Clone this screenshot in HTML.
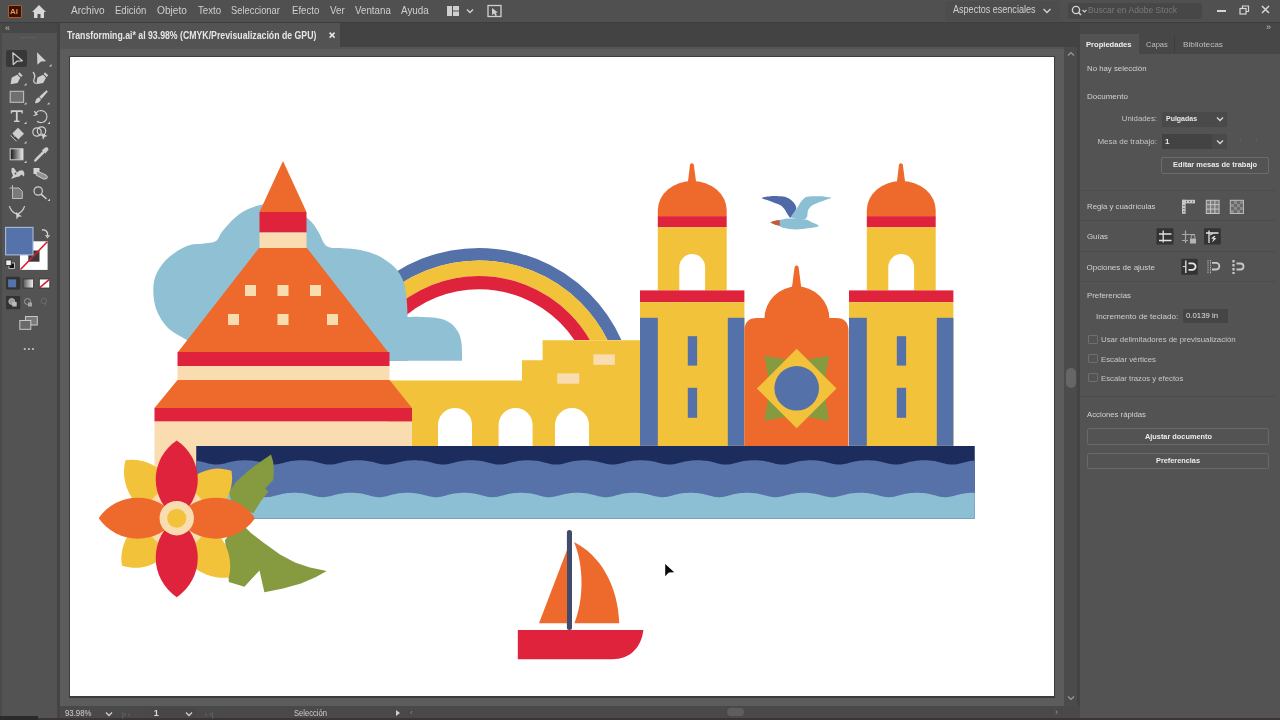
<!DOCTYPE html>
<html><head><meta charset="utf-8">
<style>
*{margin:0;padding:0;box-sizing:border-box}
html,body{width:1280px;height:720px;overflow:hidden;background:#535353;font-family:"Liberation Sans",sans-serif}
.a{position:absolute}
.t{position:absolute;white-space:nowrap}
</style></head><body>
<div id="wrap" style="position:absolute;left:0;top:0;width:1280px;height:720px;filter:blur(0.45px)">
<div class="a" style="left:0px;top:0px;width:1280px;height:22px;background:#505050;"></div>
<div class="a" style="left:0px;top:22px;width:1280px;height:1px;background:#3d3d3d;"></div>
<div class="a" style="left:0px;top:23px;width:60px;height:697px;background:#535353;"></div>
<div class="a" style="left:0px;top:23px;width:2px;height:697px;background:#4a4a4a;"></div>
<div class="a" style="left:57px;top:23px;width:3px;height:697px;background:#434343;"></div>
<div class="a" style="left:2px;top:23px;width:55px;height:10px;background:#474747;"></div>
<div class="a" style="left:60px;top:23px;width:1020px;height:24px;background:#434343;"></div>
<div class="a" style="left:60px;top:23px;width:280px;height:24px;background:#535353;"></div>
<div class="a" style="left:60px;top:47px;width:1004px;height:659px;background:#5c5c5c;"></div>
<div class="a" style="left:60px;top:47px;width:1004px;height:2px;background:#555555;"></div>
<div class="a" style="left:1064px;top:47px;width:13px;height:659px;background:#4b4b4b;"></div>
<div class="a" style="left:1077px;top:23px;width:3px;height:697px;background:#434343;"></div>
<div class="a" style="left:1080px;top:23px;width:200px;height:694px;background:#535353;"></div>
<div class="a" style="left:1080px;top:23px;width:200px;height:11px;background:#474747;"></div>
<div class="a" style="left:1139px;top:34px;width:141px;height:20px;background:#474747;"></div>
<div class="a" style="left:1174px;top:36px;width:1px;height:16px;background:#3c3c3c;"></div>
<div class="a" style="left:60px;top:706px;width:1020px;height:12px;background:#494949;"></div>
<div class="a" style="left:0px;top:717.5px;width:1280px;height:3px;background:#3b3338;"></div>
<div class="a" style="left:0px;top:716px;width:38px;height:4px;background:#2a2a2a;"></div>
<div class="a" style="left:69px;top:56px;width:986px;height:642px;background:#3c3c3c;"></div>
<div class="a" style="left:70px;top:57px;width:984px;height:639px;background:#ffffff;"></div>
<div class="t" style="left:70.60px;top:4.81px;font-size:10.5px;line-height:10.5px;font-weight:400;color:#cfcfcf;transform:scaleX(0.960);transform-origin:left;filter:blur(0.35px);">Archivo</div>
<div class="t" style="left:115.00px;top:4.81px;font-size:10.5px;line-height:10.5px;font-weight:400;color:#cfcfcf;transform:scaleX(0.909);transform-origin:left;filter:blur(0.35px);">Edición</div>
<div class="t" style="left:156.70px;top:4.81px;font-size:10.5px;line-height:10.5px;font-weight:400;color:#cfcfcf;transform:scaleX(0.967);transform-origin:left;filter:blur(0.35px);">Objeto</div>
<div class="t" style="left:197.80px;top:4.81px;font-size:10.5px;line-height:10.5px;font-weight:400;color:#cfcfcf;transform:scaleX(0.920);transform-origin:left;filter:blur(0.35px);">Texto</div>
<div class="t" style="left:231.40px;top:4.81px;font-size:10.5px;line-height:10.5px;font-weight:400;color:#cfcfcf;transform:scaleX(0.891);transform-origin:left;filter:blur(0.35px);">Seleccionar</div>
<div class="t" style="left:291.50px;top:4.81px;font-size:10.5px;line-height:10.5px;font-weight:400;color:#cfcfcf;transform:scaleX(0.917);transform-origin:left;filter:blur(0.35px);">Efecto</div>
<div class="t" style="left:329.50px;top:4.81px;font-size:10.5px;line-height:10.5px;font-weight:400;color:#cfcfcf;transform:scaleX(0.939);transform-origin:left;filter:blur(0.35px);">Ver</div>
<div class="t" style="left:354.50px;top:4.81px;font-size:10.5px;line-height:10.5px;font-weight:400;color:#cfcfcf;transform:scaleX(0.929);transform-origin:left;filter:blur(0.35px);">Ventana</div>
<div class="t" style="left:400.50px;top:4.81px;font-size:10.5px;line-height:10.5px;font-weight:400;color:#cfcfcf;transform:scaleX(0.940);transform-origin:left;filter:blur(0.35px);">Ayuda</div>
<div class="a" style="left:8px;top:5px;width:14px;height:13px;background:#3a1205;border:1px solid #a8602e;border-radius:1px"></div>
<div class="t" style="left:10.00px;top:8.23px;font-size:8px;line-height:8px;font-weight:700;color:#e99a50;filter:blur(0.3px);">Ai</div>
<svg class="a" style="left:30px;top:3px" width="18" height="17" viewBox="0 0 18 17"><path d="M9 2 L16 9 L14 9 L14 15 L10.5 15 L10.5 11 L7.5 11 L7.5 15 L4 15 L4 9 L2 9 Z" fill="#d8d8d8"/></svg>
<svg class="a" style="left:445px;top:4px" width="32" height="14" viewBox="0 0 32 14"><rect x="2" y="2" width="5" height="10" fill="#cfcfcf"/><rect x="8" y="2" width="6" height="4.5" fill="#cfcfcf"/><rect x="8" y="7.5" width="6" height="4.5" fill="#cfcfcf"/><path d="M22 5.5 L25 8.5 L28 5.5" stroke="#cfcfcf" stroke-width="1.4" fill="none"/></svg>
<svg class="a" style="left:485px;top:3px" width="20" height="16" viewBox="0 0 20 16"><rect x="3" y="2.5" width="13" height="11" fill="none" stroke="#cfcfcf" stroke-width="1.3"/><path d="M7 5 L7 12 L9 10.5 L10.5 13 L12 12.3 L10.6 9.8 L13 9.5 Z" fill="#cfcfcf"/></svg>
<div class="a" style="left:945px;top:1px;width:115px;height:20px;background:#4d4d4d;"></div>
<div class="t" style="left:952.50px;top:5.04px;font-size:10px;line-height:10px;font-weight:400;color:#d0d0d0;transform:scaleX(0.905);transform-origin:left;filter:blur(0.35px);">Aspectos esenciales</div>
<svg class="a" style="left:1042px;top:7px" width="10" height="8" viewBox="0 0 10 8"><path d="M1.5 2 L5 5.5 L8.5 2" stroke="#cfcfcf" stroke-width="1.4" fill="none"/></svg>
<div class="a" style="left:1068px;top:3px;width:134px;height:16px;background:#474747;border-radius:2px"></div>
<svg class="a" style="left:1070px;top:4px" width="20" height="14" viewBox="0 0 20 14"><circle cx="6" cy="6" r="3.6" stroke="#d0d0d0" stroke-width="1.4" fill="none"/><path d="M8.5 8.5 L11 11" stroke="#d0d0d0" stroke-width="1.6"/><path d="M12.5 6 L14.5 8 L16.5 6" stroke="#d0d0d0" stroke-width="1.1" fill="none"/></svg>
<div class="t" style="left:1088.00px;top:6.38px;font-size:9px;line-height:9px;font-weight:400;color:#7a7a7a;transform:scaleX(0.951);transform-origin:left;filter:blur(0.35px);">Buscar en Adobe Stock</div>
<div class="a" style="left:1217px;top:10px;width:9px;height:1.6px;background:#d6d6d6;"></div>
<svg class="a" style="left:1238px;top:3px" width="14" height="14" viewBox="0 0 14 14"><rect x="2" y="5.5" width="6" height="5.5" fill="none" stroke="#d6d6d6" stroke-width="1.2"/><path d="M4.5 5.5 L4.5 3 L10.5 3 L10.5 8.5 L8 8.5" fill="none" stroke="#d6d6d6" stroke-width="1.2"/></svg>
<svg class="a" style="left:1259px;top:2px" width="14" height="14" viewBox="0 0 14 14"><path d="M3 4 L10 11 M10 4 L3 11" stroke="#d6d6d6" stroke-width="1.5"/></svg>
<div class="t" style="left:66.80px;top:30.83px;font-size:10px;line-height:10px;font-weight:700;color:#e6e6e6;transform:scaleX(0.873);transform-origin:left;filter:blur(0.35px);">Transforming.ai* al 93.98% (CMYK/Previsualización de GPU)</div>
<svg class="a" style="left:327px;top:30px" width="10" height="10" viewBox="0 0 10 10"><path d="M2.6 2.6 L7.6 7.6 M7.6 2.6 L2.6 7.6" stroke="#e6e6e6" stroke-width="1.5"/></svg>
<div class="t" style="left:5.00px;top:23.88px;font-size:9px;line-height:9px;font-weight:400;color:#bdbdbd;filter:blur(0.35px);">«</div>
<div class="a" style="left:20px;top:37px;width:17px;height:1px;background:#5e5e5e;"></div>
<div class="a" style="left:6px;top:50px;width:21px;height:17px;background:#383838;border-radius:2px"></div>
<svg class="a" style="left:0;top:0" width="60" height="360" viewBox="0 0 60 360">
<g fill="none" stroke="#c9c9c9" stroke-width="1.3" stroke-linejoin="round" stroke-linecap="round">
 <!-- selection outline arrow -->
 <path d="M12.8 52.8 L22.3 60.8 L17 61.2 L13.3 64.6 Z"/>
</g>
<g fill="#cfcfcf">
 <!-- direct selection -->
 <path d="M37 52.2 L46.2 61.2 L41 61.5 L37.4 64.8 Z"/>
 <path d="M49 66.5 L51.5 64 L51.5 66.5 Z"/>
 <!-- pen -->
 <path d="M19.3 72.2 L22.6 75.5 L21 77 L18 74 Z"/>
 <path d="M17.3 74.8 L20.3 77.8 L17.5 83 L10.5 84.3 L11.8 77.5 Z"/>
 <path d="M24 85.5 L26.5 83 L26.5 85.5 Z"/>
 <!-- curvature pen -->
 <path d="M45 72.2 L48.3 75.5 L46.7 77 L43.7 74 Z"/>
 <path d="M43 74.8 L46 77.8 L43.2 83 L36.2 84.3 L37.5 77.5 Z"/>
 <path d="M24 104.5 L26.5 102 L26.5 104.5 Z"/>
 <path d="M47 104.5 L49.5 102 L49.5 104.5 Z"/>
 <!-- paintbrush -->
 <path d="M46.5 90.3 L47.8 91.6 L41.5 99 L39.3 96.8 Z"/>
 <path d="M38.8 97.3 L41 99.5 Q39.5 103 35 103.3 Q35.5 99 38.8 97.3 Z"/>
 <!-- T -->
 <path d="M10.8 110.3 L22.8 110.3 L22.8 113.5 L21.6 113.5 L21.3 112 L17.7 112 L17.7 120.5 L19.6 120.8 L19.6 122 L14 122 L14 120.8 L15.9 120.5 L15.9 112 L12.3 112 L12 113.5 L10.8 113.5 Z"/>
 <path d="M24 124 L26.5 121.5 L26.5 124 Z"/>
 <path d="M47.5 124 L50 121.5 L50 124 Z"/>
 <!-- eraser -->
 <path d="M18 127.8 L24 133.8 L16.3 141.5 L10.3 135.5 Z"/>
 <path d="M24 143.5 L26.5 141 L26.5 143.5 Z"/>
 <!-- eyedropper -->
 <path d="M45.8 147.3 Q48.5 147 48.5 149.7 L45.3 153.6 L41.9 150.2 Z"/>
 <path d="M24 163 L26.5 160.5 L26.5 163 Z"/>
 <!-- zoom small tri -->
 <path d="M47.5 201 L50 198.5 L50 201 Z"/>
</g>
<g fill="none" stroke="#cfcfcf" stroke-width="1.2" stroke-linecap="round">
 <path d="M33.3 72.5 Q35.5 75 34.5 78 Q32.5 82 35.5 83.3"/>
 <!-- rotate -->
 <path d="M35.5 114 A6 6 0 1 1 37.5 121.5" stroke-dasharray="2 1"/>
 <path d="M34.5 111.5 L37 114.5 L34 115.5" />
 <!-- shape builder -->
 <circle cx="37" cy="132" r="4.2"/>
 <circle cx="41.5" cy="131" r="4.2"/>
 <!-- eyedropper body -->
 <path d="M44 152.5 L37 159.5 Q35 161.5 34.8 161 Q34.3 160.5 36.3 158.5 L43.3 151.5" stroke-width="1.3"/>
 <!-- zoom -->
 <circle cx="38.2" cy="191" r="4.2"/>
 <path d="M41.3 194.3 L46 198.5" stroke-width="1.6"/>
 <!-- curved arrows -->
 <path d="M9.5 206.5 Q12 213 17 214 Q22 213 24.5 206.5"/>
</g>
<g fill="#cfcfcf">
 <path d="M41.5 133 L47.5 136 L44.5 137 L43 140 Z"/>
 <path d="M16 212 L22 216.5 L18.5 216.8 L16.5 219.5 Z"/>
</g>
<!-- eraser dark band -->
<path d="M12.3 133.5 L18.3 139.5 L16.9 140.9 L10.9 134.9 Z" fill="#3d3d3d"/><path d="M13.6 134.8 L15 136.2 L15 137.2 L13.6 135.8 Z" fill="#cfcfcf"/>
<!-- rectangle tool -->
<rect x="10.2" y="91.3" width="13.4" height="11" fill="#707070" stroke="#bdbdbd" stroke-width="1.1"/>
<!-- gradient tool -->
<defs>
 <linearGradient id="tg" x1="0" x2="1"><stop offset="0" stop-color="#111"/><stop offset="1" stop-color="#eee"/></linearGradient>
 <linearGradient id="tg2" x1="0" x2="1"><stop offset="0" stop-color="#555"/><stop offset="1" stop-color="#f5f5f5"/></linearGradient>
</defs>
<rect x="10.2" y="148.8" width="12.8" height="11" fill="url(#tg)" stroke="#cfcfcf" stroke-width="1"/>
<!-- puppet warp -->
<path d="M11.5 168.5 Q13.5 166.5 15 169.5 L17 172.5 Q20 169.5 23 170.5 Q25 172.5 24 176.5 L21.5 174.5 Q19.5 177 16.5 177 L11 179 L13 175.5 L11.5 172 Z" fill="#cfcfcf"/><circle cx="15.5" cy="173.5" r="0.9" fill="#555"/>
<!-- slice tool -->
<rect x="33.5" y="168" width="6" height="6" fill="#d5d5d5"/>
<path d="M37 171 L46 175 Q48.5 177 46.5 178.8 L43.5 179 L36 175 Z" fill="#909090" stroke="#cfcfcf" stroke-width="1"/>
<!-- artboard tool -->
<path d="M12.5 188 L19 188 L22.3 191.3 L22.3 198.5 L12.5 198.5 Z" fill="#7a7a7a" stroke="#bdbdbd" stroke-width="1"/>
<path d="M12.5 185 L12.5 188 M9.5 188 L12.5 188" stroke="#bdbdbd" stroke-width="1"/>
<!-- fill / stroke -->
<rect x="20" y="241.3" width="27.6" height="28.6" fill="#ffffff"/>
<rect x="28.3" y="250.5" width="11.2" height="11.2" fill="#3a3a3a"/>
<path d="M20.5 269.5 L47.3 241.8" stroke="#d21f2b" stroke-width="1.6"/>
<rect x="5.6" y="227.4" width="27.4" height="27.5" fill="#5572aa" stroke="#a9bbdc" stroke-width="1.1"/>
<path d="M42 230 Q46 229 47.5 233 L47.5 236" fill="none" stroke="#d5d5d5" stroke-width="1.3"/>
<path d="M45.5 235 L47.5 237.5 L49.5 235" fill="none" stroke="#d5d5d5" stroke-width="1.2"/>
<rect x="9" y="263" width="5.5" height="5.5" fill="#111" stroke="#ddd" stroke-width="0.8"/>
<rect x="5.8" y="260" width="5.5" height="5.5" fill="#eee" stroke="#222" stroke-width="0.8"/>
<!-- color mode row -->
<rect x="6" y="276.7" width="14.2" height="12.8" fill="#333" rx="1"/>
<rect x="7.8" y="279" width="8.8" height="8.8" fill="#5572aa" stroke="#2a2a2a" stroke-width="0.6"/>
<rect x="23" y="279" width="10.5" height="9" fill="url(#tg2)" stroke="#333" stroke-width="0.8"/>
<rect x="39.3" y="279" width="10.5" height="9" fill="#fff" stroke="#333" stroke-width="0.8"/>
<path d="M39.8 287.6 L49.4 279.4" stroke="#c8202a" stroke-width="1.5"/>
<!-- draw modes -->
<rect x="6" y="296" width="14.2" height="13.3" fill="#333" rx="1"/>
<circle cx="11.8" cy="301.5" r="3" fill="#9a9a9a" stroke="#bbb" stroke-width="0.8"/>
<rect x="12.2" y="302" width="4.5" height="4.5" fill="#bbb"/>
<circle cx="27.5" cy="301.5" r="3" fill="none" stroke="#a5a5a5" stroke-width="0.9"/>
<rect x="28" y="302.5" width="4" height="4" fill="#a5a5a5"/>
<circle cx="44" cy="301" r="2.8" fill="none" stroke="#6a6a6a" stroke-width="0.9"/>
<path d="M45.5 302 L45.5 306" stroke="#6a6a6a" stroke-width="0.9"/>
<!-- screen mode -->
<rect x="25.5" y="316.5" width="11.8" height="8.5" fill="#7a7a7a" stroke="#c8c8c8" stroke-width="1"/>
<rect x="19.8" y="320.5" width="11" height="8.8" fill="#6a6a6a" stroke="#c8c8c8" stroke-width="1"/>
<!-- more -->
<circle cx="24.8" cy="349" r="1.1" fill="#c5c5c5"/><circle cx="28.9" cy="349" r="1.1" fill="#c5c5c5"/><circle cx="33" cy="349" r="1.1" fill="#c5c5c5"/>
</svg>

<div class="t" style="left:1266.00px;top:23.38px;font-size:9px;line-height:9px;font-weight:400;color:#bdbdbd;filter:blur(0.35px);">»</div>
<div class="t" style="left:1086.00px;top:41.03px;font-size:8px;line-height:8px;font-weight:700;color:#f0f0f0;transform:scaleX(0.948);transform-origin:left;filter:blur(0.35px);">Propiedades</div>
<div class="t" style="left:1146.00px;top:41.03px;font-size:8px;line-height:8px;font-weight:400;color:#bdbdbd;transform:scaleX(0.943);transform-origin:left;filter:blur(0.35px);">Capas</div>
<div class="t" style="left:1183.00px;top:41.03px;font-size:8px;line-height:8px;font-weight:400;color:#bdbdbd;transform:scaleX(1.034);transform-origin:left;filter:blur(0.35px);">Bibliotecas</div>
<div class="t" style="left:1086.80px;top:65.13px;font-size:8px;line-height:8px;font-weight:400;color:#d2d2d2;transform:scaleX(0.977);transform-origin:left;filter:blur(0.35px);">No hay selección</div>
<div class="t" style="left:1087.00px;top:92.53px;font-size:8px;line-height:8px;font-weight:400;color:#d2d2d2;filter:blur(0.35px);">Documento</div>
<div class="t" style="left:1120.68px;top:114.63px;font-size:8px;line-height:8px;font-weight:400;color:#c4c4c4;transform:scaleX(0.977);transform-origin:right;filter:blur(0.35px);">Unidades:</div>
<div class="a" style="left:1162px;top:112px;width:65px;height:15px;background:#4a4a4a;box-shadow:0 0 0 0.5px #505050"></div>
<div class="t" style="left:1166.00px;top:115.23px;font-size:8px;line-height:8px;font-weight:700;color:#e8e8e8;transform:scaleX(0.872);transform-origin:left;filter:blur(0.35px);">Pulgadas</div>
<svg class="a" style="left:1215px;top:115px" width="10" height="8" viewBox="0 0 10 8"><path d="M2 2.5 L5 5.5 L8 2.5" stroke="#d8d8d8" stroke-width="1.3" fill="none"/></svg>
<div class="t" style="left:1097.41px;top:137.73px;font-size:8px;line-height:8px;font-weight:400;color:#c4c4c4;filter:blur(0.35px);">Mesa de trabajo:</div>
<div class="a" style="left:1162px;top:134px;width:65px;height:15px;background:#4a4a4a;"></div>
<div class="a" style="left:1162px;top:134px;width:50px;height:15px;background:#434343;"></div>
<div class="t" style="left:1165.00px;top:137.73px;font-size:8px;line-height:8px;font-weight:700;color:#e8e8e8;filter:blur(0.35px);">1</div>
<svg class="a" style="left:1215px;top:138px" width="10" height="8" viewBox="0 0 10 8"><path d="M2 2.5 L5 5.5 L8 2.5" stroke="#d8d8d8" stroke-width="1.3" fill="none"/></svg>
<div class="t" style="left:1239.00px;top:137.23px;font-size:8px;line-height:8px;font-weight:400;color:#6a6a6a;filter:blur(0.35px);">‹</div>
<div class="t" style="left:1255.00px;top:137.23px;font-size:8px;line-height:8px;font-weight:400;color:#6a6a6a;filter:blur(0.35px);">›</div>
<div class="a" style="left:1161px;top:156.5px;width:108px;height:17px;border:1px solid #6c6c6c;border-radius:2px"></div>
<div class="t" style="left:1169.87px;top:161.23px;font-size:8px;line-height:8px;font-weight:700;color:#ececec;transform:scaleX(0.931);transform-origin:center;filter:blur(0.35px);">Editar mesas de trabajo</div>
<div class="a" style="left:1080px;top:190px;width:195px;height:1px;background:#4c4c4c;"></div>
<div class="t" style="left:1086.50px;top:203.23px;font-size:8px;line-height:8px;font-weight:400;color:#d2d2d2;transform:scaleX(0.975);transform-origin:left;filter:blur(0.35px);">Regla y cuadrículas</div>
<div class="a" style="left:1080px;top:220px;width:195px;height:1px;background:#4c4c4c;"></div>
<div class="t" style="left:1086.50px;top:233.23px;font-size:8px;line-height:8px;font-weight:400;color:#d2d2d2;transform:scaleX(0.984);transform-origin:left;filter:blur(0.35px);">Guías</div>
<div class="a" style="left:1080px;top:251px;width:195px;height:1px;background:#4c4c4c;"></div>
<div class="t" style="left:1086.50px;top:263.73px;font-size:8px;line-height:8px;font-weight:400;color:#d2d2d2;filter:blur(0.35px);">Opciones de ajuste</div>
<div class="a" style="left:1080px;top:281px;width:195px;height:1px;background:#4c4c4c;"></div>
<div class="t" style="left:1086.50px;top:291.73px;font-size:8px;line-height:8px;font-weight:400;color:#d2d2d2;transform:scaleX(0.980);transform-origin:left;filter:blur(0.35px);">Preferencias</div>
<div class="t" style="left:1095.50px;top:312.73px;font-size:8px;line-height:8px;font-weight:400;color:#cfcfcf;transform:scaleX(1.011);transform-origin:left;filter:blur(0.35px);">Incremento de teclado:</div>
<div class="a" style="left:1183px;top:309px;width:45px;height:14px;background:#454545;"></div>
<div class="t" style="left:1186.00px;top:312.23px;font-size:8px;line-height:8px;font-weight:400;color:#e0e0e0;transform:scaleX(0.972);transform-origin:left;filter:blur(0.35px);">0.0139 in</div>
<div class="a" style="left:1088px;top:335px;width:10px;height:9px;border:1px solid #6e6e6e;border-radius:1px"></div>
<div class="t" style="left:1101.00px;top:336.23px;font-size:8px;line-height:8px;font-weight:400;color:#c8c8c8;transform:scaleX(0.983);transform-origin:left;filter:blur(0.35px);">Usar delimitadores de previsualización</div>
<div class="a" style="left:1088px;top:354.3px;width:10px;height:9px;border:1px solid #6e6e6e;border-radius:1px"></div>
<div class="t" style="left:1101.00px;top:355.53px;font-size:8px;line-height:8px;font-weight:400;color:#c8c8c8;transform:scaleX(0.974);transform-origin:left;filter:blur(0.35px);">Escalar vértices</div>
<div class="a" style="left:1088px;top:373.3px;width:10px;height:9px;border:1px solid #6e6e6e;border-radius:1px"></div>
<div class="t" style="left:1101.00px;top:374.53px;font-size:8px;line-height:8px;font-weight:400;color:#c8c8c8;transform:scaleX(0.969);transform-origin:left;filter:blur(0.35px);">Escalar trazos y efectos</div>
<div class="a" style="left:1080px;top:396px;width:195px;height:1px;background:#4c4c4c;"></div>
<div class="t" style="left:1086.50px;top:411.23px;font-size:8px;line-height:8px;font-weight:400;color:#d2d2d2;transform:scaleX(0.968);transform-origin:left;filter:blur(0.35px);">Acciones rápidas</div>
<div class="a" style="left:1087px;top:428px;width:182px;height:16.5px;border:1px solid #686868;border-radius:2px"></div>
<div class="t" style="left:1141.55px;top:432.73px;font-size:8px;line-height:8px;font-weight:700;color:#ececec;transform:scaleX(0.919);transform-origin:center;filter:blur(0.35px);">Ajustar documento</div>
<div class="a" style="left:1087px;top:452.5px;width:182px;height:16.5px;border:1px solid #686868;border-radius:2px"></div>
<div class="t" style="left:1153.98px;top:457.23px;font-size:8px;line-height:8px;font-weight:700;color:#ececec;transform:scaleX(0.916);transform-origin:center;filter:blur(0.35px);">Preferencias</div>
<svg class="a" style="left:1080px;top:190px" width="200" height="100" viewBox="1080 190 200 100">
<g fill="#c8c8c8">
 <!-- ruler -->
 <rect x="1182" y="199.8" width="13" height="3.6"/>
 <rect x="1182" y="199.8" width="3.6" height="14"/>
</g>
<g fill="#6e6e6e">
 <rect x="1186" y="200.8" width="1" height="1.6"/><rect x="1189" y="200.8" width="1" height="1.6"/><rect x="1192" y="200.8" width="1" height="1.6"/>
 <rect x="1183" y="205" width="1.6" height="1"/><rect x="1183" y="208" width="1.6" height="1"/><rect x="1183" y="211" width="1.6" height="1"/>
</g>
<!-- grid -->
<rect x="1206.3" y="200.3" width="12.8" height="13.2" fill="#7a7a7a" stroke="#c4c4c4" stroke-width="1"/>
<path d="M1210.6 200.3 V213.5 M1214.9 200.3 V213.5 M1206.3 204.7 H1219.1 M1206.3 209.1 H1219.1" stroke="#c4c4c4" stroke-width="1"/>
<!-- transparency grid -->
<rect x="1230.3" y="200.3" width="13.2" height="13.2" fill="#8a8a8a" stroke="#b8b8b8" stroke-width="1"/>
<g fill="#6a6a6a"><rect x="1231" y="201" width="3" height="3"/><rect x="1237" y="201" width="3" height="3"/><rect x="1234" y="204" width="3" height="3"/><rect x="1240" y="204" width="3" height="3"/><rect x="1231" y="207" width="3" height="3"/><rect x="1237" y="207" width="3" height="3"/><rect x="1234" y="210" width="3" height="3"/><rect x="1240" y="210" width="3" height="3"/></g>
<!-- guides row -->
<rect x="1156.5" y="228.2" width="17" height="16.4" fill="#333" rx="1"/>
<path d="M1159 234 H1171.5 M1159 240.5 H1171.5 M1163.2 230.5 V242.5" stroke="#e2e2e2" stroke-width="1.3"/>
<path d="M1182 234.5 H1195 M1182 240.5 H1188 M1185.5 230.5 V243" stroke="#a8a8a8" stroke-width="1.2"/>
<rect x="1190" y="238.5" width="6" height="5" fill="#b5b5b5"/>
<path d="M1191.2 238.5 V236.5 A1.8 1.8 0 0 1 1194.8 236.5 V238.5" fill="none" stroke="#b5b5b5" stroke-width="0.9"/>
<rect x="1204" y="228.2" width="16.8" height="16.4" fill="#333" rx="1"/>
<path d="M1206 233 H1218.5 M1209 230.5 V243" stroke="#e2e2e2" stroke-width="1.3"/>
<path d="M1214 236 L1211 238.5 L1213.5 238.8 L1212 242.5 L1216.5 238.3 L1214 238 L1215.5 236 Z" fill="#e2e2e2"/>
<path d="M1210 235 L1213 233.5" stroke="#e2e2e2" stroke-width="1"/>
<!-- snap row -->
<rect x="1181.3" y="258.8" width="16.5" height="16" fill="#333" rx="1"/>
<path d="M1185.8 260.5 V273" stroke="#e6e6e6" stroke-width="1.3"/>
<path d="M1188.5 263.3 H1192.3 A3.3 3.3 0 0 1 1192.3 269.9 H1188.5" fill="none" stroke="#e6e6e6" stroke-width="1.8"/>
<path d="M1182.8 266.6 L1185 266.6" stroke="#e6e6e6" stroke-width="1"/>
<path d="M1208 260 V274 M1210.5 260 V274" stroke="#b0b0b0" stroke-width="1" stroke-dasharray="1.5 0.8"/>
<path d="M1212 262.8 H1216 A3.3 3.3 0 0 1 1216 269.5 H1212" fill="none" stroke="#c8c8c8" stroke-width="1.8"/>
<path d="M1233.5 260 V274" stroke="#c8c8c8" stroke-width="2.2" stroke-dasharray="2.5 1.5"/>
<path d="M1236.5 263.5 H1240.5 A3 3 0 0 1 1240.5 269.5 H1236.5" fill="none" stroke="#c8c8c8" stroke-width="1.8"/>
</svg>

<svg class="a" style="left:1065px;top:49px" width="12" height="10" viewBox="0 0 12 10"><path d="M3 6.5 L6 3.5 L9 6.5" stroke="#9a9a9a" stroke-width="1.2" fill="none"/></svg>
<div class="a" style="left:1066px;top:368px;width:10px;height:20px;background:#666666;border-radius:5px"></div>
<svg class="a" style="left:1065px;top:693px" width="12" height="10" viewBox="0 0 12 10"><path d="M3 3.5 L6 6.5 L9 3.5" stroke="#9a9a9a" stroke-width="1.2" fill="none"/></svg>
<div class="a" style="left:727px;top:708px;width:17px;height:8px;background:#5e5e5e;border-radius:4px"></div>
<div class="t" style="left:65.00px;top:709.28px;font-size:9px;line-height:9px;font-weight:400;color:#cfcfcf;transform:scaleX(0.868);transform-origin:left;filter:blur(0.35px);">93.98%</div>
<svg class="a" style="left:103px;top:710px" width="12" height="8" viewBox="0 0 12 8"><path d="M3 2.5 L6 5.5 L9 2.5" stroke="#d0d0d0" stroke-width="1.3" fill="none"/></svg>
<div class="t" style="left:122.00px;top:710.57px;font-size:7px;line-height:7px;font-weight:400;color:#6f6f6f;filter:blur(0.35px);">|‹ ‹</div>
<div class="a" style="left:151px;top:708px;width:45px;height:9.5px;background:#474747;"></div>
<div class="t" style="left:153.80px;top:709.28px;font-size:9px;line-height:9px;font-weight:700;color:#d8d8d8;filter:blur(0.35px);">1</div>
<svg class="a" style="left:183px;top:710px" width="12" height="8" viewBox="0 0 12 8"><path d="M3 2.5 L6 5.5 L9 2.5" stroke="#d0d0d0" stroke-width="1.3" fill="none"/></svg>
<div class="t" style="left:205.00px;top:710.57px;font-size:7px;line-height:7px;font-weight:400;color:#6f6f6f;filter:blur(0.35px);">› ›|</div>
<div class="t" style="left:294.00px;top:709.28px;font-size:9px;line-height:9px;font-weight:400;color:#cfcfcf;transform:scaleX(0.846);transform-origin:left;filter:blur(0.35px);">Selección</div>
<svg class="a" style="left:394px;top:709px" width="8" height="8" viewBox="0 0 8 8"><path d="M2 1 L6 4 L2 7 Z" fill="#d0d0d0"/></svg>
<div class="t" style="left:410.00px;top:709.23px;font-size:8px;line-height:8px;font-weight:400;color:#8a8a8a;filter:blur(0.35px);">‹</div>
<div class="t" style="left:1055.00px;top:708.38px;font-size:9px;line-height:9px;font-weight:400;color:#9a9a9a;filter:blur(0.35px);">›</div>
<svg class="a" style="left:0;top:0" width="1280" height="720" viewBox="0 0 1280 720">
<defs>
  <clipPath id="above340"><rect x="0" y="0" width="1280" height="340"/></clipPath>
</defs>
<!-- rainbow -->
<g clip-path="url(#above340)">
  <circle cx="479" cy="404" r="149.8" fill="none" stroke="#5571a9" stroke-width="12.6"/>
  <circle cx="479" cy="404" r="135.8" fill="none" stroke="#f1c23a" stroke-width="15.6"/>
  <circle cx="479" cy="404" r="121.4" fill="none" stroke="#e0233c" stroke-width="13.2"/>
</g>
<!-- cloud -->
<path fill="#8fc0d4" d="M186.0 339.5 C183.0 337.6 172.9 332.9 168.0 328.0 C163.1 323.1 158.9 316.4 156.5 310.0 C154.1 303.6 153.2 295.7 153.3 289.5 C153.4 283.3 154.2 278.3 156.8 273.0 C159.4 267.7 163.5 262.1 168.6 257.6 C173.7 253.1 181.6 248.2 187.5 245.8 C193.4 243.4 199.3 244.2 204.0 243.4 C208.7 242.6 212.7 243.2 215.9 241.0 C219.1 238.8 219.1 234.9 223.0 230.4 C226.9 225.9 233.6 218.0 239.5 213.9 C245.4 209.8 251.1 207.2 258.4 205.6 C265.6 203.9 274.8 201.9 283.0 204.0 C291.2 206.1 301.6 213.7 307.5 218.3 C313.4 222.9 315.6 227.5 318.3 231.7 C321.1 235.9 322.1 240.7 324.0 243.3 C325.9 245.9 326.8 246.7 330.0 247.5 C333.2 248.3 338.0 247.9 343.0 248.3 C348.0 248.7 354.4 248.9 360.0 250.0 C365.6 251.1 371.7 252.8 376.7 255.0 C381.7 257.2 386.4 260.5 390.0 263.3 C393.6 266.1 396.0 268.4 398.3 271.7 C400.6 275.0 402.6 278.6 404.0 283.3 C405.4 288.0 406.1 294.9 406.7 300.0 C407.3 305.1 407.4 311.7 407.5 314.0 L407.5 361 L260 361 L205 352 Z"/>
<path fill="#8fc0d4" d="M380.0 317.0 C384.6 317.0 401.6 317.0 407.5 317.0 C413.4 317.0 410.6 316.6 415.6 316.8 C420.7 317.0 432.0 317.2 437.8 318.2 C443.6 319.2 446.8 320.6 450.3 323.0 C453.8 325.4 456.8 329.6 458.6 332.8 C460.5 336.1 460.8 339.3 461.4 342.5 C462.0 345.7 461.9 350.4 462.0 352.0 L462 360.8 L380 360.8 Z"/>
<!-- pyramid -->
<polygon fill="#ee6a2c" points="283,161 306.5,212 259.5,212"/>
<rect x="259.5" y="212" width="47" height="20.5" fill="#e0233c"/>
<rect x="259.5" y="232.5" width="47" height="15.5" fill="#f9ddb1"/>
<polygon fill="#ee6a2c" points="259,248 307,248 388,352 178,352"/>
<g fill="#f9ddb1">
  <rect x="245" y="285" width="11" height="11"/><rect x="277.5" y="285" width="11" height="11"/><rect x="310" y="285" width="11" height="11"/>
  <rect x="228" y="314" width="11" height="11"/><rect x="277.5" y="314" width="11" height="11"/><rect x="327" y="314" width="11" height="11"/>
</g>
<rect x="177.5" y="352" width="212" height="14" fill="#e0233c"/>
<rect x="177.5" y="366" width="212" height="14" fill="#f9ddb1"/>
<!-- aqueduct -->
<path fill="#f1c23a" d="M388 380.4 L522 380.4 L522 360.3 L542.6 360.3 L542.6 340.2 L640 340.2 L640 446 L388 446 Z"/>
<g fill="#fff">
  <path d="M438 446 L438 425 A17 17 0 0 1 472 425 L472 446 Z"/>
  <path d="M498.6 446 L498.6 425 A17 17 0 0 1 532.6 425 L532.6 446 Z"/>
  <path d="M555 446 L555 425 A17 17 0 0 1 589 425 L589 446 Z"/>
</g>
<rect x="593.4" y="354.4" width="21.4" height="10.4" fill="#f9ddb1"/>
<rect x="557.2" y="373.4" width="22.1" height="10.3" fill="#f9ddb1"/>
<polygon fill="#ee6a2c" points="177.5,380 389.6,380 412,408 154.5,408"/>
<rect x="154.5" y="408" width="257.5" height="13.6" fill="#e0233c"/>
<rect x="154.5" y="421.6" width="257.5" height="80" fill="#f9ddb1"/>

<!-- left tower -->
<g id="tower">
  <path fill="#ee6a2c" d="M686.5 184 Q688.3 182.5 688.3 179 L690 164.5 Q691.9 162 693.8 164.5 L695.7 179 Q695.7 182.5 697.5 184 Z"/>
  <path fill="#ee6a2c" d="M657.8 216.5 L657.8 210 A34.45 29 0 0 1 726.7 210 L726.7 216.5 Z"/>
  <rect x="657.8" y="216.2" width="68.9" height="11.1" fill="#e0233c"/>
  <path fill="#f1c23a" d="M657.8 227.3 L726.7 227.3 L726.7 290.5 L705.1 290.5 L705.1 267 A12.9 12.9 0 0 0 679.3 267 L679.3 290.5 L657.8 290.5 Z"/>
  <rect x="640" y="290.4" width="104.4" height="11.8" fill="#e0233c"/>
  <rect x="640" y="302.2" width="104.4" height="144" fill="#f1c23a"/>
  <rect x="640" y="317.8" width="17.8" height="128" fill="#5571a9"/>
  <rect x="727.8" y="317.8" width="16.6" height="128" fill="#5571a9"/>
  <rect x="687.8" y="336.2" width="9.3" height="29.4" fill="#5571a9"/>
  <rect x="687.8" y="387.8" width="9.3" height="30" fill="#5571a9"/>
</g>
<use href="#tower" x="209"/>
<!-- central building -->
<path fill="#ee6a2c" d="M789 290 Q792.2 288.5 792.4 284 L794.6 267 Q796.6 264.2 798.6 267 L800.8 284 Q801 288.5 804.2 290 Z"/>
<path fill="#ee6a2c" d="M744.4 446 L744.4 331 Q744.4 318 757 318 L764.4 318 L764.4 319 A32.5 32.5 0 0 1 829.4 319 L829.4 318 L836 318 Q848.5 318 848.5 331 L848.5 446 Z"/>
<polygon fill="#869a40" points="764.5,355.8 796.7,361.5 829,355.8 823.5,388.3 829,420.8 796.7,415 764.5,420.8 770,388.3"/>
<polygon fill="#f1c23a" points="796.7,348.8 836.5,388.5 796.7,428.2 756.9,388.5"/>
<circle cx="796.7" cy="388.3" r="22.3" fill="#5571a9"/>

<!-- bird -->
<path fill="#4f69a8" d="M761.8 198.1 C761.8 197.3 767.0 196.5 770.5 196.2 C774.0 196.0 779.9 196.2 783.0 196.6 C786.1 197.0 787.5 197.8 789.2 198.8 C791.0 199.7 792.5 201.1 793.6 202.5 C794.7 203.9 795.8 205.6 796.1 206.9 C796.4 208.2 796.3 208.8 795.5 210.6 C794.7 212.4 792.4 216.8 791.1 217.5 C789.9 218.2 789.1 216.5 788.0 215.0 C786.9 213.5 785.6 210.4 784.2 208.8 C782.9 207.1 782.2 206.2 779.9 205.0 C777.6 203.8 773.5 202.4 770.5 201.2 C767.5 200.1 761.8 198.9 761.8 198.1 Z"/>
<path fill="#8bbfd4" d="M831.1 197.8 C832.1 198.4 829.0 198.7 826.8 199.6 C824.5 200.5 820.0 202.0 817.4 203.1 C814.8 204.2 812.7 205.0 811.1 206.2 C809.5 207.5 808.9 208.5 808.0 210.6 C807.1 212.7 808.2 217.6 805.5 218.8 C802.8 219.9 793.4 218.9 791.8 217.5 C790.1 216.1 794.2 212.8 795.5 210.6 C796.8 208.4 798.0 206.3 799.2 204.4 C800.5 202.5 801.5 200.7 803.0 199.4 C804.5 198.1 805.1 197.1 808.0 196.6 C810.9 196.1 816.6 196.1 820.5 196.2 C824.4 196.4 830.1 197.2 831.1 197.8 Z"/>
<path fill="#8bbfd4" d="M770.5 222.5 C770.5 221.8 774.9 221.1 776.8 220.6 C778.6 220.1 779.5 219.8 781.8 219.4 C784.0 219.0 786.5 218.4 790.5 218.4 C794.5 218.4 801.9 218.7 805.5 219.4 C809.1 220.1 810.2 221.4 812.4 222.5 C814.6 223.6 819.1 225.0 818.6 225.9 C818.1 226.8 813.1 227.5 809.2 228.1 C805.4 228.7 799.7 229.4 795.5 229.4 C791.3 229.4 787.4 228.8 784.2 228.1 C781.1 227.4 779.0 225.9 776.8 225.0 C774.5 224.1 770.5 223.2 770.5 222.5 Z"/>
<path fill="#c9583a" d="M770.5 222.5 Q773 220.8 777.5 220.3 L779.5 220 L780 225.6 Q774 225 770.5 222.5 Z"/>
<!-- water -->
<rect x="196.25" y="446" width="778.5" height="72.5" fill="#1b2c5d"/>
<path id="w1" fill="#5672a9" d="M196.25 518.5 L196.2 460.74 L197.8 460.94 L199.2 461.19 L200.8 461.49 L202.2 461.83 L203.8 462.20 L205.2 462.59 L206.8 462.99 L208.2 463.38 L209.8 463.75 L211.2 464.06 L212.8 464.32 L214.2 464.50 L215.8 464.59 L217.2 464.59 L218.8 464.50 L220.2 464.32 L221.8 464.06 L223.2 463.75 L224.8 463.38 L226.2 462.99 L227.8 462.59 L229.2 462.20 L230.8 461.83 L232.2 461.49 L233.8 461.19 L235.2 460.94 L236.8 460.74 L238.2 460.58 L239.8 460.46 L241.2 460.38 L242.8 460.32 L244.2 460.30 L245.8 460.31 L247.2 460.34 L248.8 460.40 L250.2 460.49 L251.8 460.62 L253.2 460.79 L254.8 461.00 L256.2 461.27 L257.8 461.58 L259.2 461.92 L260.8 462.30 L262.2 462.70 L263.8 463.10 L265.2 463.48 L266.8 463.84 L268.2 464.14 L269.8 464.37 L271.2 464.53 L272.8 464.60 L274.2 464.57 L275.8 464.46 L277.2 464.26 L278.8 463.98 L280.2 463.65 L281.8 463.28 L283.2 462.88 L284.8 462.48 L286.2 462.10 L287.8 461.73 L289.2 461.41 L290.8 461.12 L292.2 460.88 L293.8 460.69 L295.2 460.54 L296.8 460.43 L298.2 460.36 L299.8 460.32 L301.2 460.30 L302.8 460.31 L304.2 460.35 L305.8 460.42 L307.2 460.52 L308.8 460.66 L310.2 460.84 L311.8 461.07 L313.2 461.35 L314.8 461.66 L316.2 462.02 L317.8 462.40 L319.2 462.80 L320.8 463.20 L322.2 463.58 L323.8 463.92 L325.2 464.21 L326.8 464.42 L328.2 464.56 L329.8 464.60 L331.2 464.55 L332.8 464.41 L334.2 464.19 L335.8 463.90 L337.2 463.56 L338.8 463.18 L340.2 462.78 L341.8 462.38 L343.2 462.00 L344.8 461.64 L346.2 461.33 L347.8 461.05 L349.2 460.83 L350.8 460.65 L352.2 460.51 L353.8 460.41 L355.2 460.35 L356.8 460.31 L358.2 460.30 L359.8 460.32 L361.2 460.36 L362.8 460.44 L364.2 460.55 L365.8 460.70 L367.2 460.90 L368.8 461.14 L370.2 461.43 L371.8 461.76 L373.2 462.12 L374.8 462.51 L376.2 462.91 L377.8 463.31 L379.2 463.68 L380.8 464.00 L382.2 464.27 L383.8 464.47 L385.2 464.58 L386.8 464.60 L388.2 464.52 L389.8 464.36 L391.2 464.12 L392.8 463.81 L394.2 463.46 L395.8 463.07 L397.2 462.67 L398.8 462.27 L400.2 461.90 L401.8 461.55 L403.2 461.25 L404.8 460.99 L406.2 460.78 L407.8 460.61 L409.2 460.48 L410.8 460.39 L412.2 460.33 L413.8 460.30 L415.2 460.30 L416.8 460.33 L418.2 460.38 L419.8 460.47 L421.2 460.59 L422.8 460.75 L424.2 460.96 L425.8 461.21 L427.2 461.51 L428.8 461.85 L430.2 462.22 L431.8 462.62 L433.2 463.02 L434.8 463.41 L436.2 463.77 L437.8 464.08 L439.2 464.33 L440.8 464.51 L442.2 464.59 L443.8 464.59 L445.2 464.49 L446.8 464.30 L448.2 464.04 L449.8 463.72 L451.2 463.36 L452.8 462.96 L454.2 462.56 L455.8 462.17 L457.2 461.80 L458.8 461.47 L460.2 461.17 L461.8 460.93 L463.2 460.73 L464.8 460.57 L466.2 460.45 L467.8 460.37 L469.2 460.32 L470.8 460.30 L472.2 460.31 L473.8 460.34 L475.2 460.40 L476.8 460.49 L478.2 460.63 L479.8 460.80 L481.2 461.02 L482.8 461.29 L484.2 461.60 L485.8 461.95 L487.2 462.33 L488.8 462.72 L490.2 463.12 L491.8 463.51 L493.2 463.86 L494.8 464.16 L496.2 464.39 L497.8 464.54 L499.2 464.60 L500.8 464.57 L502.2 464.45 L503.8 464.24 L505.2 463.96 L506.8 463.63 L508.2 463.25 L509.8 462.86 L511.2 462.46 L512.8 462.07 L514.2 461.71 L515.8 461.39 L517.2 461.10 L518.8 460.87 L520.2 460.68 L521.8 460.53 L523.2 460.43 L524.8 460.36 L526.2 460.31 L527.8 460.30 L529.2 460.31 L530.8 460.35 L532.2 460.42 L533.8 460.53 L535.2 460.67 L536.8 460.86 L538.2 461.09 L539.8 461.37 L541.2 461.69 L542.8 462.05 L544.2 462.43 L545.8 462.83 L547.2 463.23 L548.8 463.60 L550.2 463.94 L551.8 464.22 L553.2 464.44 L554.8 464.56 L556.2 464.60 L557.8 464.54 L559.2 464.40 L560.8 464.17 L562.2 463.88 L563.8 463.53 L565.2 463.15 L566.8 462.75 L568.2 462.35 L569.8 461.97 L571.2 461.62 L572.8 461.31 L574.2 461.04 L575.8 460.81 L577.2 460.64 L578.8 460.50 L580.2 460.41 L581.8 460.34 L583.2 460.31 L584.8 460.30 L586.2 460.32 L587.8 460.37 L589.2 460.45 L590.8 460.56 L592.2 460.71 L593.8 460.91 L595.2 461.16 L596.8 461.45 L598.2 461.78 L599.8 462.15 L601.2 462.54 L602.8 462.94 L604.2 463.33 L605.8 463.70 L607.2 464.02 L608.8 464.29 L610.2 464.48 L611.8 464.58 L613.2 464.59 L614.8 464.51 L616.2 464.35 L617.8 464.10 L619.2 463.79 L620.8 463.43 L622.2 463.04 L623.8 462.64 L625.2 462.25 L626.8 461.87 L628.2 461.53 L629.8 461.23 L631.2 460.97 L632.8 460.76 L634.2 460.60 L635.8 460.47 L637.2 460.39 L638.8 460.33 L640.2 460.30 L641.8 460.30 L643.2 460.33 L644.8 460.39 L646.2 460.47 L647.8 460.60 L649.2 460.76 L650.8 460.97 L652.2 461.23 L653.8 461.53 L655.2 461.87 L656.8 462.25 L658.2 462.64 L659.8 463.04 L661.2 463.43 L662.8 463.79 L664.2 464.10 L665.8 464.35 L667.2 464.51 L668.8 464.59 L670.2 464.58 L671.8 464.48 L673.2 464.29 L674.8 464.02 L676.2 463.70 L677.8 463.33 L679.2 462.94 L680.8 462.54 L682.2 462.15 L683.8 461.78 L685.2 461.45 L686.8 461.16 L688.2 460.91 L689.8 460.71 L691.2 460.56 L692.8 460.45 L694.2 460.37 L695.8 460.32 L697.2 460.30 L698.8 460.31 L700.2 460.34 L701.8 460.41 L703.2 460.50 L704.8 460.64 L706.2 460.81 L707.8 461.04 L709.2 461.31 L710.8 461.62 L712.2 461.97 L713.8 462.35 L715.2 462.75 L716.8 463.15 L718.2 463.53 L719.8 463.88 L721.2 464.17 L722.8 464.40 L724.2 464.54 L725.8 464.60 L727.2 464.56 L728.8 464.44 L730.2 464.22 L731.8 463.94 L733.2 463.60 L734.8 463.23 L736.2 462.83 L737.8 462.43 L739.2 462.05 L740.8 461.69 L742.2 461.37 L743.8 461.09 L745.2 460.86 L746.8 460.67 L748.2 460.53 L749.8 460.42 L751.2 460.35 L752.8 460.31 L754.2 460.30 L755.8 460.31 L757.2 460.36 L758.8 460.43 L760.2 460.53 L761.8 460.68 L763.2 460.87 L764.8 461.10 L766.2 461.39 L767.8 461.71 L769.2 462.07 L770.8 462.46 L772.2 462.86 L773.8 463.25 L775.2 463.63 L776.8 463.96 L778.2 464.24 L779.8 464.45 L781.2 464.57 L782.8 464.60 L784.2 464.54 L785.8 464.39 L787.2 464.16 L788.8 463.86 L790.2 463.51 L791.8 463.12 L793.2 462.72 L794.8 462.33 L796.2 461.95 L797.8 461.60 L799.2 461.29 L800.8 461.02 L802.2 460.80 L803.8 460.63 L805.2 460.49 L806.8 460.40 L808.2 460.34 L809.8 460.31 L811.2 460.30 L812.8 460.32 L814.2 460.37 L815.8 460.45 L817.2 460.57 L818.8 460.73 L820.2 460.93 L821.8 461.17 L823.2 461.47 L824.8 461.80 L826.2 462.17 L827.8 462.56 L829.2 462.96 L830.8 463.36 L832.2 463.72 L833.8 464.04 L835.2 464.30 L836.8 464.49 L838.2 464.59 L839.8 464.59 L841.2 464.51 L842.8 464.33 L844.2 464.08 L845.8 463.77 L847.2 463.41 L848.8 463.02 L850.2 462.62 L851.8 462.22 L853.2 461.85 L854.8 461.51 L856.2 461.21 L857.8 460.96 L859.2 460.75 L860.8 460.59 L862.2 460.47 L863.8 460.38 L865.2 460.33 L866.8 460.30 L868.2 460.30 L869.8 460.33 L871.2 460.39 L872.8 460.48 L874.2 460.61 L875.8 460.78 L877.2 460.99 L878.8 461.25 L880.2 461.55 L881.8 461.90 L883.2 462.27 L884.8 462.67 L886.2 463.07 L887.8 463.46 L889.2 463.81 L890.8 464.12 L892.2 464.36 L893.8 464.52 L895.2 464.60 L896.8 464.58 L898.2 464.47 L899.8 464.27 L901.2 464.00 L902.8 463.68 L904.2 463.31 L905.8 462.91 L907.2 462.51 L908.8 462.12 L910.2 461.76 L911.8 461.43 L913.2 461.14 L914.8 460.90 L916.2 460.70 L917.8 460.55 L919.2 460.44 L920.8 460.36 L922.2 460.32 L923.8 460.30 L925.2 460.31 L926.8 460.35 L928.2 460.41 L929.8 460.51 L931.2 460.65 L932.8 460.83 L934.2 461.05 L935.8 461.33 L937.2 461.64 L938.8 462.00 L940.2 462.38 L941.8 462.78 L943.2 463.18 L944.8 463.56 L946.2 463.90 L947.8 464.19 L949.2 464.41 L950.8 464.55 L952.2 464.60 L953.8 464.56 L955.2 464.42 L956.8 464.21 L958.2 463.92 L959.8 463.58 L961.2 463.20 L962.8 462.80 L964.2 462.40 L965.8 462.02 L967.2 461.66 L968.8 461.35 L970.2 461.07 L971.8 460.84 L973.2 460.66 L974.8 460.52 L974.8 460.52 L974.75 518.5 Z"/>
<path id="w2" fill="#8cbfd3" d="M196.25 518.5 L196.2 494.63 L197.8 495.02 L199.2 495.43 L200.8 495.83 L202.2 496.21 L203.8 496.55 L205.2 496.84 L206.8 497.04 L208.2 497.17 L209.8 497.20 L211.2 497.14 L212.8 496.98 L214.2 496.75 L215.8 496.45 L217.2 496.09 L218.8 495.70 L220.2 495.29 L221.8 494.89 L223.2 494.50 L224.8 494.14 L226.2 493.82 L227.8 493.55 L229.2 493.32 L230.8 493.14 L232.2 493.00 L233.8 492.91 L235.2 492.84 L236.8 492.81 L238.2 492.80 L239.8 492.82 L241.2 492.88 L242.8 492.96 L244.2 493.08 L245.8 493.24 L247.2 493.45 L248.8 493.71 L250.2 494.01 L251.8 494.35 L253.2 494.73 L254.8 495.13 L256.2 495.54 L257.8 495.94 L259.2 496.31 L260.8 496.64 L262.2 496.90 L263.8 497.09 L265.2 497.18 L266.8 497.19 L268.2 497.10 L269.8 496.93 L271.2 496.67 L272.8 496.36 L274.2 495.99 L275.8 495.59 L277.2 495.18 L278.8 494.78 L280.2 494.40 L281.8 494.05 L283.2 493.74 L284.8 493.48 L286.2 493.27 L287.8 493.10 L289.2 492.97 L290.8 492.88 L292.2 492.83 L293.8 492.80 L295.2 492.80 L296.8 492.83 L298.2 492.89 L299.8 492.99 L301.2 493.12 L302.8 493.30 L304.2 493.52 L305.8 493.78 L307.2 494.10 L308.8 494.45 L310.2 494.83 L311.8 495.24 L313.2 495.65 L314.8 496.04 L316.2 496.40 L317.8 496.71 L319.2 496.96 L320.8 497.12 L322.2 497.20 L323.8 497.18 L325.2 497.07 L326.8 496.87 L328.2 496.60 L329.8 496.26 L331.2 495.88 L332.8 495.48 L334.2 495.07 L335.8 494.68 L337.2 494.30 L338.8 493.97 L340.2 493.67 L341.8 493.42 L343.2 493.22 L344.8 493.06 L346.2 492.95 L347.8 492.87 L349.2 492.82 L350.8 492.80 L352.2 492.81 L353.8 492.85 L355.2 492.92 L356.8 493.02 L358.2 493.16 L359.8 493.35 L361.2 493.58 L362.8 493.86 L364.2 494.19 L365.8 494.55 L367.2 494.94 L368.8 495.35 L370.2 495.75 L371.8 496.14 L373.2 496.49 L374.8 496.78 L376.2 497.01 L377.8 497.15 L379.2 497.20 L380.8 497.16 L382.2 497.02 L383.8 496.80 L385.2 496.51 L386.8 496.16 L388.2 495.78 L389.8 495.37 L391.2 494.97 L392.8 494.57 L394.2 494.21 L395.8 493.88 L397.2 493.60 L398.8 493.36 L400.2 493.17 L401.8 493.03 L403.2 492.92 L404.8 492.85 L406.2 492.81 L407.8 492.80 L409.2 492.82 L410.8 492.86 L412.2 492.94 L413.8 493.05 L415.2 493.21 L416.8 493.41 L418.2 493.65 L419.8 493.94 L421.2 494.28 L422.8 494.65 L424.2 495.05 L425.8 495.46 L427.2 495.86 L428.8 496.24 L430.2 496.57 L431.8 496.85 L433.2 497.06 L434.8 497.17 L436.2 497.20 L437.8 497.13 L439.2 496.97 L440.8 496.73 L442.2 496.42 L443.8 496.06 L445.2 495.67 L446.8 495.27 L448.2 494.86 L449.8 494.47 L451.2 494.12 L452.8 493.80 L454.2 493.53 L455.8 493.31 L457.2 493.13 L458.8 493.00 L460.2 492.90 L461.8 492.84 L463.2 492.81 L464.8 492.80 L466.2 492.83 L467.8 492.88 L469.2 492.97 L470.8 493.09 L472.2 493.26 L473.8 493.47 L475.2 493.73 L476.8 494.03 L478.2 494.38 L479.8 494.75 L481.2 495.16 L482.8 495.56 L484.2 495.96 L485.8 496.33 L487.2 496.66 L488.8 496.91 L490.2 497.10 L491.8 497.19 L493.2 497.19 L494.8 497.10 L496.2 496.91 L497.8 496.66 L499.2 496.33 L500.8 495.96 L502.2 495.56 L503.8 495.16 L505.2 494.75 L506.8 494.38 L508.2 494.03 L509.8 493.73 L511.2 493.47 L512.8 493.26 L514.2 493.09 L515.8 492.97 L517.2 492.88 L518.8 492.83 L520.2 492.80 L521.8 492.81 L523.2 492.84 L524.8 492.90 L526.2 493.00 L527.8 493.13 L529.2 493.31 L530.8 493.53 L532.2 493.80 L533.8 494.12 L535.2 494.47 L536.8 494.86 L538.2 495.27 L539.8 495.67 L541.2 496.06 L542.8 496.42 L544.2 496.73 L545.8 496.97 L547.2 497.13 L548.8 497.20 L550.2 497.17 L551.8 497.06 L553.2 496.85 L554.8 496.57 L556.2 496.24 L557.8 495.86 L559.2 495.46 L560.8 495.05 L562.2 494.65 L563.8 494.28 L565.2 493.94 L566.8 493.65 L568.2 493.41 L569.8 493.21 L571.2 493.05 L572.8 492.94 L574.2 492.86 L575.8 492.82 L577.2 492.80 L578.8 492.81 L580.2 492.85 L581.8 492.92 L583.2 493.03 L584.8 493.17 L586.2 493.36 L587.8 493.60 L589.2 493.88 L590.8 494.21 L592.2 494.57 L593.8 494.97 L595.2 495.37 L596.8 495.78 L598.2 496.16 L599.8 496.51 L601.2 496.80 L602.8 497.02 L604.2 497.16 L605.8 497.20 L607.2 497.15 L608.8 497.01 L610.2 496.78 L611.8 496.49 L613.2 496.14 L614.8 495.75 L616.2 495.35 L617.8 494.94 L619.2 494.55 L620.8 494.19 L622.2 493.86 L623.8 493.58 L625.2 493.35 L626.8 493.16 L628.2 493.02 L629.8 492.92 L631.2 492.85 L632.8 492.81 L634.2 492.80 L635.8 492.82 L637.2 492.87 L638.8 492.95 L640.2 493.06 L641.8 493.22 L643.2 493.42 L644.8 493.67 L646.2 493.97 L647.8 494.30 L649.2 494.68 L650.8 495.07 L652.2 495.48 L653.8 495.88 L655.2 496.26 L656.8 496.60 L658.2 496.87 L659.8 497.07 L661.2 497.18 L662.8 497.20 L664.2 497.12 L665.8 496.96 L667.2 496.71 L668.8 496.40 L670.2 496.04 L671.8 495.65 L673.2 495.24 L674.8 494.83 L676.2 494.45 L677.8 494.10 L679.2 493.78 L680.8 493.52 L682.2 493.30 L683.8 493.12 L685.2 492.99 L686.8 492.89 L688.2 492.83 L689.8 492.80 L691.2 492.80 L692.8 492.83 L694.2 492.88 L695.8 492.97 L697.2 493.10 L698.8 493.27 L700.2 493.48 L701.8 493.74 L703.2 494.05 L704.8 494.40 L706.2 494.78 L707.8 495.18 L709.2 495.59 L710.8 495.99 L712.2 496.36 L713.8 496.67 L715.2 496.93 L716.8 497.10 L718.2 497.19 L719.8 497.18 L721.2 497.09 L722.8 496.90 L724.2 496.64 L725.8 496.31 L727.2 495.94 L728.8 495.54 L730.2 495.13 L731.8 494.73 L733.2 494.35 L734.8 494.01 L736.2 493.71 L737.8 493.45 L739.2 493.24 L740.8 493.08 L742.2 492.96 L743.8 492.88 L745.2 492.82 L746.8 492.80 L748.2 492.81 L749.8 492.84 L751.2 492.91 L752.8 493.00 L754.2 493.14 L755.8 493.32 L757.2 493.55 L758.8 493.82 L760.2 494.14 L761.8 494.50 L763.2 494.89 L764.8 495.29 L766.2 495.70 L767.8 496.09 L769.2 496.45 L770.8 496.75 L772.2 496.98 L773.8 497.14 L775.2 497.20 L776.8 497.17 L778.2 497.04 L779.8 496.84 L781.2 496.55 L782.8 496.21 L784.2 495.83 L785.8 495.43 L787.2 495.02 L788.8 494.63 L790.2 494.26 L791.8 493.92 L793.2 493.63 L794.8 493.39 L796.2 493.20 L797.8 493.05 L799.2 492.93 L800.8 492.86 L802.2 492.81 L803.8 492.80 L805.2 492.81 L806.8 492.85 L808.2 492.93 L809.8 493.04 L811.2 493.19 L812.8 493.38 L814.2 493.62 L815.8 493.90 L817.2 494.23 L818.8 494.60 L820.2 494.99 L821.8 495.40 L823.2 495.81 L824.8 496.19 L826.2 496.53 L827.8 496.82 L829.2 497.03 L830.8 497.16 L832.2 497.20 L833.8 497.14 L835.2 497.00 L836.8 496.77 L838.2 496.47 L839.8 496.12 L841.2 495.73 L842.8 495.32 L844.2 494.91 L845.8 494.52 L847.2 494.16 L848.8 493.84 L850.2 493.57 L851.8 493.34 L853.2 493.15 L854.8 493.01 L856.2 492.91 L857.8 492.84 L859.2 492.81 L860.8 492.80 L862.2 492.82 L863.8 492.87 L865.2 492.95 L866.8 493.07 L868.2 493.23 L869.8 493.44 L871.2 493.69 L872.8 493.99 L874.2 494.33 L875.8 494.70 L877.2 495.10 L878.8 495.51 L880.2 495.91 L881.8 496.29 L883.2 496.62 L884.8 496.88 L886.2 497.08 L887.8 497.18 L889.2 497.19 L890.8 497.11 L892.2 496.94 L893.8 496.69 L895.2 496.38 L896.8 496.01 L898.2 495.62 L899.8 495.21 L901.2 494.81 L902.8 494.42 L904.2 494.07 L905.8 493.76 L907.2 493.50 L908.8 493.28 L910.2 493.11 L911.8 492.98 L913.2 492.89 L914.8 492.83 L916.2 492.80 L917.8 492.80 L919.2 492.83 L920.8 492.89 L922.2 492.98 L923.8 493.11 L925.2 493.28 L926.8 493.50 L928.2 493.76 L929.8 494.07 L931.2 494.42 L932.8 494.81 L934.2 495.21 L935.8 495.62 L937.2 496.01 L938.8 496.38 L940.2 496.69 L941.8 496.94 L943.2 497.11 L944.8 497.19 L946.2 497.18 L947.8 497.08 L949.2 496.88 L950.8 496.62 L952.2 496.29 L953.8 495.91 L955.2 495.51 L956.8 495.10 L958.2 494.70 L959.8 494.33 L961.2 493.99 L962.8 493.69 L964.2 493.44 L965.8 493.23 L967.2 493.07 L968.8 492.95 L970.2 492.87 L971.8 492.82 L973.2 492.80 L974.8 492.81 L974.8 492.81 L974.75 518.5 Z"/>

<!-- leaves -->
<polygon fill="#869a40" points="271.1,454.4 273.2,462 273.8,470 273.3,480 265,488.5 268.5,491.5 261,501 253.3,513.3 232,505 229,492 236,482 248,471 260,462"/>
<polygon fill="#869a40" points="240,522 251,533 264,543 280,554.5 295,562.5 310,567.5 326.7,571 316,577 301,583.5 283,588.5 264.4,592.2 259.5,570.5 244.4,586.7 228.9,582 225,540"/>
<!-- flower -->
<g transform="translate(176.75 518.2)">
<path fill="#f1c23a" transform="rotate(-41.5)" d="M0 0 A46.9 46.9 0 0 1 0 -77.5 A46.9 46.9 0 0 1 0 0 Z"/>
<path fill="#f1c23a" transform="rotate(49)" d="M0 0 A42.3 42.3 0 0 1 0 -72.5 A42.3 42.3 0 0 1 0 0 Z"/>
<path fill="#f1c23a" transform="rotate(138.7)" d="M0 0 A48.3 48.3 0 0 1 0 -79 A48.3 48.3 0 0 1 0 0 Z"/>
<path fill="#f1c23a" transform="rotate(-131)" d="M0 0 A42.3 42.3 0 0 1 0 -72.5 A42.3 42.3 0 0 1 0 0 Z"/>
<circle r="31" fill="#f9ddb1"/>
<path fill="#e0233c" transform="rotate(0)" d="M0 0 A46.4 46.4 0 0 1 0 -77.7 A46.4 46.4 0 0 1 0 0 Z"/>
<path fill="#e0233c" transform="rotate(180)" d="M0 0 A47.6 47.6 0 0 1 0 -79 A47.6 47.6 0 0 1 0 0 Z"/>
<path fill="#ee6a2c" transform="rotate(-90)" d="M0 0 A47.3 47.3 0 0 1 0 -78 A47.3 47.3 0 0 1 0 0 Z"/>
<path fill="#ee6a2c" transform="rotate(90)" d="M0 0 A47.6 47.6 0 0 1 0 -78.3 A47.6 47.6 0 0 1 0 0 Z"/>
<circle r="17.2" fill="#f9ddb1"/>
<circle r="9.5" fill="#f1c23a"/>
</g>
<!-- sailboat -->
<rect x="566.9" y="530" width="5.1" height="100" rx="2.5" fill="#434b6d"/>
<polygon fill="#ee6a2c" points="567,550 567,623.3 539,623.3"/>
<path fill="#ee6a2c" d="M574 542 C600 555 618 585 619.3 623.3 L574.4 623.3 C584 600 584 565 574 542 Z"/>
<path fill="#e0233c" d="M517.8 630 L643.4 630 C641 648 630 659.2 612 659.2 L517.8 659.2 Z"/>
<!-- cursor -->
<path fill="#0a0a0a" d="M665.2 564 L674.2 572.2 L668.8 572.6 L665.2 576.2 Z"/>
</svg>

</div>
</body></html>
